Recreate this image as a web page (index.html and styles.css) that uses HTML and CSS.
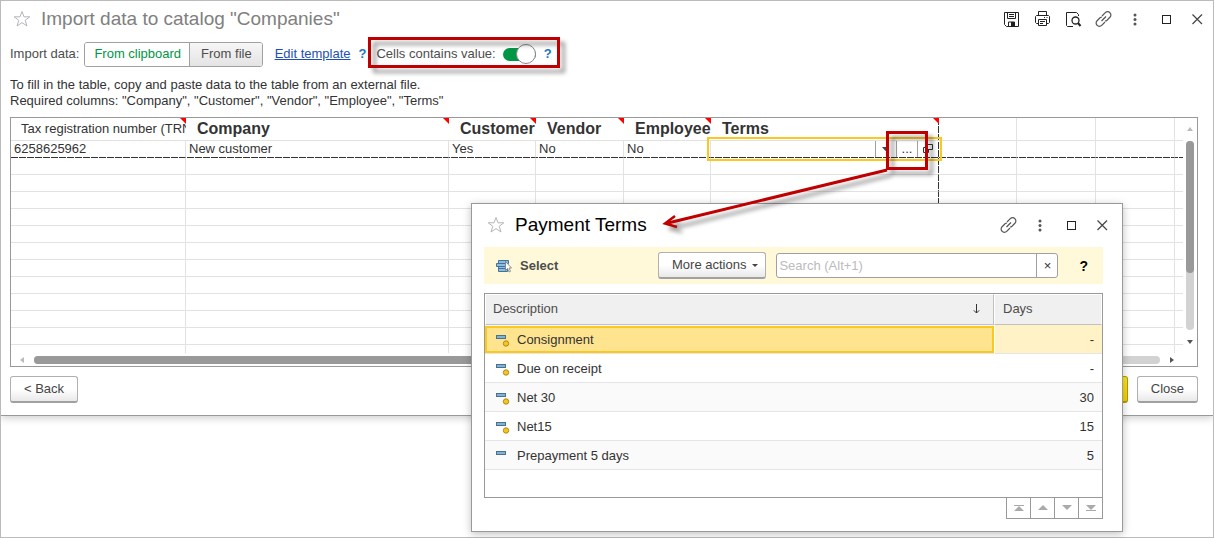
FILE: index.html
```html
<!DOCTYPE html>
<html lang="en">
<head>
  <meta charset="UTF-8" />
  <meta name="viewport" content="width=device-width, initial-scale=1.0"/>
  <title>Import data to catalog "Companies"</title>
  <link rel="stylesheet" href="styles.css">
</head>

<body>
  <svg class="sprite" width="0" height="0" aria-hidden="true">
    <symbol id="star" viewBox="0 0 18 18">
      <path d="M9 1.5l2 5.3h5.8l-4.6 3.5 1.8 5.7L9 12.6 4 16l1.8-5.7L1.200 6.800H7z" fill="none" stroke="#b2b6bb"/>
    </symbol>
    <symbol id="link" viewBox="0 0 18 18">
      <g fill="none" stroke="#555" stroke-width="1.200">
        <path d="M7 6l3.300-3.300a3.200 3.200 0 0 1 4.600 0a3.200 3.200 0 0 1 0 4.600L12 10.200a3.200 3.200 0 0 1-2 .8"/>
        <path d="M10 12l-3.300 3.300a3.200 3.200 0 0 1-4.600 0a3.200 3.200 0 0 1 0-4.600L5 7.800a3.200 3.200 0 0 1 2-.8"/>
        <path d="M6.500 11l4.500-4.500"/>
      </g>
    </symbol>
    <symbol id="dots" viewBox="0 0 18 18">
      <g fill="#555"><circle cx="9" cy="5" r="1.500"/><circle cx="9" cy="9.500" r="1.500"/><circle cx="9" cy="14" r="1.500"/></g>
    </symbol>
    <symbol id="square" viewBox="0 0 18 18">
      <rect x="5.500" y="5.500" width="8" height="8" fill="none" stroke="#222"/>
    </symbol>
    <symbol id="cross" viewBox="0 0 18 18">
      <path d="M4.500 4.500l9.500 9.500M14 4.500L4.500 14" stroke="#444" stroke-width="1.200"/>
    </symbol>
    <symbol id="item" viewBox="0 0 14 14">
      <rect x=".5" y="2.500" width="9" height="3" fill="#7fb2d9" stroke="#4a718f"/>
    </symbol>
    <symbol id="item-dot" viewBox="0 0 14 14">
      <rect x=".5" y="2.500" width="9" height="3" fill="#7fb2d9" stroke="#4a718f"/>
      <circle cx="10" cy="10.500" r="2.700" fill="#f3c623" stroke="#b18a12"/>
    </symbol>
  </svg>

  <main class="window">
    <header class="titlebar">
      <button class="star" aria-label="Favorite"><svg width="18" height="18"><use href="#star"/></svg></button>
      <h1>Import data to catalog "Companies"</h1>
      <div class="tools">
        <button aria-label="Save">
          <svg width="18" height="18" viewBox="0 0 18 18" fill="none" stroke="#222">
            <path d="M2.500 2.500h14v14h-12l-2-2z M5.500 2.500v6h8v-6 M7 4.500h5 M7 6.500h5 M6.500 16v-4h6v4"/>
            <path d="M9 12h3.500v4H9z" fill="#222" stroke="none"/>
          </svg>
        </button>
        <button aria-label="Print">
          <svg width="18" height="18" viewBox="0 0 18 18" fill="none" stroke="#222">
            <path d="M5.500 5.500v-4h8v4 M5 13.500H3.500l-1-1v-6l1-1h12l1 1v6l-1 1H14 M5.500 9.500h8v6h-8z M7 11.500h5 M7 13.500h3 M11 7.500h1 M13.500 7.500h1"/>
          </svg>
        </button>
        <button aria-label="Preview">
          <svg width="18" height="18" viewBox="0 0 18 18" fill="none" stroke="#222">
            <path d="M9 16.500H3.500l-1-1v-13h10l2 2V6"/>
            <circle cx="11.500" cy="10.500" r="3.500" stroke-width="1.300"/>
            <path d="M14 13l2.500 3" stroke-width="2"/>
          </svg>
        </button>
        <button aria-label="Copy link"><svg width="18" height="18"><use href="#link"/></svg></button>
        <button aria-label="More"><svg width="18" height="18"><use href="#dots"/></svg></button>
        <button aria-label="Maximize"><svg width="18" height="18"><use href="#square"/></svg></button>
        <button aria-label="Close window"><svg width="18" height="18"><use href="#cross"/></svg></button>
      </div>
    </header>

    <div class="options">
      <span>Import data:</span>
      <div class="segmented">
        <button class="active">From clipboard</button>
        <button>From file</button>
      </div>
      <a class="template" href="#">Edit template</a>
      <a class="help" href="#">?</a>
      <div class="cells-value">
        <label for="cells">Cells contains value:</label>
        <input class="toggle" type="checkbox" id="cells" checked>
        <a class="help" href="#">?</a>
      </div>
    </div>

    <p class="hint">
      To fill in the table, copy and paste data to the table from an external file.<br>
      Required columns: "Company", "Customer", "Vendor", "Employee", "Terms"
    </p>

    <div class="sheet">
      <table class="grid">
        <colgroup>
          <col class="c-tax"><col class="c-company"><col class="c-customer"><col class="c-vendor"><col class="c-employee">
          <col class="c-terms"><col class="c-first"><col class="c-blank"><col class="c-blank"><col>
        </colgroup>
        <thead>
          <tr>
            <th class="note plain">Tax registration number (TRN)</th>
            <th class="note">Company</th>
            <th class="note">Customer</th>
            <th class="note">Vendor</th>
            <th class="note">Employee</th>
            <th class="note">Terms</th>
            <td></td><td></td><td></td><td></td>
          </tr>
        </thead>
        <tbody>
          <tr class="filled">
            <td>6258625962</td>
            <td>New customer</td>
            <td>Yes</td>
            <td>No</td>
            <td>No</td>
            <td class="editing">
              <div class="editor">
                <input type="text" aria-label="Terms">
                <button aria-label="Drop down"><svg width="8" height="4" viewBox="0 0 8 4"><path d="M0 0h7L3.500 4z" fill="#444"/></svg></button>
                <button aria-label="Select">...</button>
                <button aria-label="Open"><svg width="10" height="10" viewBox="0 0 10 10" fill="none" stroke="#333"><path d="M2.500 .5h7v5h-7z M2.500 3.500h-2v5h5v-3"/></svg></button>
              </div>
            </td>
            <td></td><td></td><td></td><td></td>
          </tr>
          <tr><td></td><td></td><td></td><td></td><td></td><td></td><td></td><td></td><td></td><td></td></tr>
          <tr><td></td><td></td><td></td><td></td><td></td><td></td><td></td><td></td><td></td><td></td></tr>
          <tr><td></td><td></td><td></td><td></td><td></td><td></td><td></td><td></td><td></td><td></td></tr>
          <tr><td></td><td></td><td></td><td></td><td></td><td></td><td></td><td></td><td></td><td></td></tr>
          <tr><td></td><td></td><td></td><td></td><td></td><td></td><td></td><td></td><td></td><td></td></tr>
          <tr><td></td><td></td><td></td><td></td><td></td><td></td><td></td><td></td><td></td><td></td></tr>
          <tr><td></td><td></td><td></td><td></td><td></td><td></td><td></td><td></td><td></td><td></td></tr>
          <tr><td></td><td></td><td></td><td></td><td></td><td></td><td></td><td></td><td></td><td></td></tr>
          <tr><td></td><td></td><td></td><td></td><td></td><td></td><td></td><td></td><td></td><td></td></tr>
          <tr><td></td><td></td><td></td><td></td><td></td><td></td><td></td><td></td><td></td><td></td></tr>
          <tr><td></td><td></td><td></td><td></td><td></td><td></td><td></td><td></td><td></td><td></td></tr>
          <tr class="cut"><td></td><td></td><td></td><td></td><td></td><td></td><td></td><td></td><td></td><td></td></tr>
        </tbody>
      </table>
      <div class="scroll-y">
        <svg width="6" height="4" viewBox="0 0 6 4"><path d="M0 4h6L3 0z" fill="#bbb"/></svg>
        <div class="track"><div class="thumb"></div></div>
        <svg width="6" height="4" viewBox="0 0 6 4"><path d="M0 0h6L3 4z" fill="#555"/></svg>
      </div>
      <div class="scroll-x">
        <svg width="4" height="6" viewBox="0 0 4 6"><path d="M4 0v6L0 3z" fill="#bbb"/></svg>
        <div class="track"><div class="thumb"></div></div>
        <svg width="4" height="6" viewBox="0 0 4 6"><path d="M0 0v6l4-3z" fill="#555"/></svg>
      </div>
    </div>

    <footer class="footer">
      <button class="btn">&lt; Back</button>
      <button class="btn next" aria-label="Next"></button>
      <button class="btn">Close</button>
    </footer>
  </main>

  <section class="dialog">
    <header class="titlebar">
      <button class="star" aria-label="Favorite"><svg width="18" height="18"><use href="#star"/></svg></button>
      <h2>Payment Terms</h2>
      <div class="tools">
        <button aria-label="Copy link"><svg width="18" height="18"><use href="#link"/></svg></button>
        <button aria-label="More"><svg width="18" height="18"><use href="#dots"/></svg></button>
        <button aria-label="Maximize"><svg width="18" height="18"><use href="#square"/></svg></button>
        <button aria-label="Close dialog"><svg width="18" height="18"><use href="#cross"/></svg></button>
      </div>
    </header>

    <div class="commands">
      <button class="select">
        <svg width="16" height="16" viewBox="0 0 16 16">
          <g fill="#8dbce0" stroke="#42739b">
            <path d="M2.500 2.500h10v3h-10z M.5 5.500h10v3H.5z M2.500 8.500h9v2h-9z M2.500 10.500h9v3h-9z"/>
          </g>
          <path d="M9.500 3.500v9l2-2 1.500 3.500 1.500-.7-1.500-3.300h2.500z" fill="#fff" stroke="#777" stroke-width=".8"/>
        </svg>
        Select
      </button>
      <button class="btn more">More actions <svg width="6" height="3" viewBox="0 0 6 3"><path d="M0 0h6L3 3z" fill="#444"/></svg></button>
      <div class="search">
        <input type="text" placeholder="Search (Alt+1)" aria-label="Search">
        <button aria-label="Clear">×</button>
      </div>
      <button class="ask">?</button>
    </div>

    <div class="list">
      <table>
        <colgroup><col><col class="c-days"></colgroup>
        <thead>
          <tr>
            <th>
              <div class="sorted">Description
                <svg width="7" height="10" viewBox="0 0 7 10"><path d="M3.500 0v9M.8 6.300l2.700 2.700 2.700-2.700" fill="none" stroke="#333"/></svg>
              </div>
            </th>
            <th>Days</th>
          </tr>
        </thead>
        <tbody>
          <tr class="current">
            <td><div class="name"><svg width="14" height="14"><use href="#item-dot"/></svg>Consignment</div></td>
            <td>-</td>
          </tr>
          <tr>
            <td><div class="name"><svg width="14" height="14"><use href="#item-dot"/></svg>Due on receipt</div></td>
            <td>-</td>
          </tr>
          <tr>
            <td><div class="name"><svg width="14" height="14"><use href="#item-dot"/></svg>Net 30</div></td>
            <td>30</td>
          </tr>
          <tr>
            <td><div class="name"><svg width="14" height="14"><use href="#item-dot"/></svg>Net15</div></td>
            <td>15</td>
          </tr>
          <tr>
            <td><div class="name"><svg width="14" height="14"><use href="#item"/></svg>Prepayment 5 days</div></td>
            <td>5</td>
          </tr>
        </tbody>
      </table>
    </div>

    <div class="pager">
      <button aria-label="First"><svg width="10" height="6" viewBox="0 0 10 6"><path d="M0 0h10v1H0z M5 1l5 5H0z" fill="#aaa"/></svg></button>
      <button aria-label="Previous"><svg width="10" height="6" viewBox="0 0 10 6"><path d="M5 0l5 5H0z" fill="#aaa"/></svg></button>
      <button aria-label="Next"><svg width="10" height="6" viewBox="0 0 10 6"><path d="M0 0h10L5 5z" fill="#aaa"/></svg></button>
      <button aria-label="Last"><svg width="10" height="6" viewBox="0 0 10 6"><path d="M0 0h10L5 5z M0 5h10v1H0z" fill="#aaa"/></svg></button>
    </div>
  </section>

  <!-- marks the select button and points to the dialog -->
  <svg class="pointer" width="290" height="120" viewBox="0 0 290 120" fill="none" stroke="#c00000" stroke-width="3" aria-hidden="true">
    <rect x="227.500" y="7.500" width="39" height="36"/>
    <path d="M227 45L8 98"/>
    <path d="M15 91L5 98.500L17 102" stroke-width="2.500"/>
  </svg>
</body>
</html>
```

FILE: styles.css
```css
* {
  box-sizing: border-box;
}
body {
  margin: 0;
  min-height: 100vh;
  border: 1px solid #bbb;
  background-color: #fff;
  color: #333;
  font-family: "Liberation Sans", Arial, sans-serif;
  font-size: 13px;
  line-height: 16px;
}
button, input {
  font: inherit;
  color: inherit;
  outline: none;
}
button {
  padding: 0;
  border: none;
  background: none;
}
svg {
  flex: none;
}
.sprite {
  position: absolute;
}

/* main window */
.window {
  border-bottom: 1px solid #999;
  box-shadow: 0 2px 8px rgba(0, 0, 0, 0.2);
}
.titlebar {
  display: flex;
  align-items: center;
  height: 36px;
  padding: 0 1px 0 12px;
}
.star {
  display: flex;
  margin-right: 10px;
}
h1, h2 {
  margin: 0;
  font-size: 19px;
  font-weight: normal;
  line-height: 24px;
  color: #808080;
}
h2 {
  color: #000;
}
.tools {
  display: flex;
  margin-left: auto;
}
.tools button {
  display: flex;
  justify-content: center;
  width: 31px;
}
.options {
  display: flex;
  align-items: center;
  height: 34px;
  padding-left: 9px;
  color: #4d4d4d;
}
.segmented {
  display: flex;
  height: 25px;
  margin: 0 12px 0 5px;
  border: 1px solid #a0a0a0;
  border-radius: 3px;
}
.segmented button {
  padding: 0 10px 0 11px;
  border-radius: 0 2px 2px 0;
  background: linear-gradient(#f6f6f6, #e4e4e4);
}
.segmented .active {
  padding: 0 8px 0 9px;
  border-right: 1px solid #a0a0a0;
  border-radius: 2px 0 0 2px;
  background: #fff;
  color: #009646;
}
.template {
  color: #1d50b5;
}
.help {
  margin-left: 8px;
  color: #1a78c2;
  text-decoration: none;
  font-weight: bold;
}
.cells-value {
  position: relative;
  display: flex;
  align-items: center;
  margin-left: 10px;
}
.cells-value::after {
  content: "";
  position: absolute;
  inset: -9px -8px -6px;
  border: 3px solid #c00000;
  filter: drop-shadow(5px 5px 2px rgba(0, 0, 0, 0.4));
  pointer-events: none;
}
.toggle {
  appearance: none;
  display: flex;
  justify-content: flex-end;
  align-items: center;
  width: 33px;
  height: 13px;
  margin: 0 0 0 7px;
  border-radius: 7px;
  background: #009646;
}
.toggle::before {
  content: "";
  flex: none;
  width: 18px;
  height: 18px;
  border: 1px solid #888;
  border-radius: 50%;
  background: #fff;
}
.hint {
  margin: 6px 9px 8px;
}

/* spreadsheet */
.sheet {
  display: grid;
  grid-template-columns: 1fr 14px;
  margin: 0 15px 0 9px;
  border: 1px solid #999;
}
table {
  width: 100%;
  table-layout: fixed;
  border-collapse: separate;
  border-spacing: 0;
}
.c-tax { width: 175px; }
.c-company { width: 263px; }
.c-customer, .c-employee { width: 87px; }
.c-vendor { width: 88px; }
.c-terms {
  width: 228px;
  background: repeating-linear-gradient(#333 0 7px, #fff 7px 8px) right / 1px 100% no-repeat;
}
.c-first { width: 78px; }
.c-blank { width: 79px; }
.grid th {
  height: 23px;
  padding: 0 0 0 11px;
  border-bottom: 1px solid #e2e2e2;
  font-size: 16px;
  line-height: 22px;
  text-align: left;
  white-space: nowrap;
  overflow: hidden;
}
.grid .plain {
  padding-left: 10px;
  font-size: 13px;
  font-weight: normal;
}
.note {
  position: relative;
}
.note::after {
  content: "";
  position: absolute;
  top: 0;
  right: 0;
  border-top: 6px solid #f00;
  border-left: 6px solid transparent;
}
.grid td {
  height: 17px;
  padding: 0 0 0 3px;
  border-right: 1px solid #e2e2e2;
  border-bottom: 1px solid #e2e2e2;
}
.grid td:last-child {
  border-right: none;
}
.grid tbody td:nth-child(6) {
  border-right-color: transparent;
}
.grid .filled {
  background: repeating-linear-gradient(to right, #333 0 7px, #fff 7px 8px) bottom / 100% 1px no-repeat;
}
.grid .filled td {
  border-bottom-color: transparent;
}
.grid .cut td {
  height: 8px;
  border-bottom: none;
}
.editing {
  position: relative;
}
.editor {
  position: absolute;
  inset: -4px;
  display: flex;
  padding: 2px 2px 2px 0;
  border: 2px solid #fac81e;
}
.editor input {
  flex: 1;
  min-width: 0;
  padding: 0 4px;
  border: none;
  background: none;
}
.editor button {
  display: flex;
  align-items: center;
  justify-content: center;
  width: 21px;
  border-left: 1px solid #a0a0a0;
}
.scroll-y, .scroll-x {
  display: flex;
  align-items: center;
}
.scroll-y {
  flex-direction: column;
  gap: 10px;
  padding: 9px 0;
}
.scroll-x {
  gap: 10px;
  height: 13px;
  padding: 0 9px;
}
.track {
  flex: 1;
  border-radius: 4px;
  background: #d2d2d2;
}
.thumb {
  border-radius: 4px;
  background: #999;
}
.scroll-y .track { width: 8px; }
.scroll-y .thumb { height: 70%; }
.scroll-x .track, .scroll-x .thumb { height: 8px; }
.scroll-x .thumb { width: 80%; }

.btn {
  height: 27px;
  padding: 0 13px;
  border: 1px solid #b0b0b0;
  border-bottom: 2px solid #a0a0a0;
  border-radius: 3px;
  background: linear-gradient(#fff 50%, #e9e9e9);
  color: #444;
}
.footer {
  display: flex;
  gap: 9px;
  padding: 9px 15px 12px 9px;
}
.next {
  width: 80px;
  margin-left: auto;
  border-color: #b39b00;
  background: linear-gradient(#ffe61e, #f0d200);
}

/* payment terms dialog */
.dialog {
  position: absolute;
  left: 471px;
  top: 203px;
  width: 652px;
  padding: 0 19px 12px 12px;
  border: 1px solid #999;
  background: #fff;
  box-shadow: 0 2px 8px rgba(0, 0, 0, 0.25);
}
.dialog .titlebar {
  height: 41px;
  margin: 0 -15px 2px 0;
  padding-left: 3px;
}
.commands {
  display: flex;
  align-items: center;
  height: 37px;
  padding: 0 15px 0 12px;
  background: #fff9d9;
}
.select {
  display: flex;
  align-items: center;
  gap: 8px;
  margin-right: auto;
  font-weight: bold;
  color: #4d4d4d;
}
.more {
  display: flex;
  align-items: center;
  gap: 6px;
  padding: 0 7px 0 13px;
}
.search {
  display: flex;
  width: 282px;
  height: 25px;
  margin: 0 21px 0 10px;
  border: 1px solid #a0a0a0;
  border-radius: 3px;
  background: #fff;
}
.search input {
  flex: 1;
  min-width: 0;
  padding: 0 2px;
  border: none;
  background: none;
}
.search input::placeholder {
  color: #bbb;
}
.search button {
  width: 21px;
  border-left: 1px solid #a0a0a0;
}
.ask {
  font-size: 14px;
  font-weight: bold;
  color: #000;
}
.list {
  min-height: 205px;
  margin-top: 9px;
  border: 1px solid #999;
}
.c-days { width: 108px; }
.list th {
  height: 31px;
  padding: 0 8px 2px;
  border: 1px solid #fff;
  border-bottom: 1px solid #c0c0c0;
  background: #f0f0f0;
  color: #4d4d4d;
  font-weight: normal;
  text-align: left;
}
.list th:first-child {
  padding-left: 7px;
  border-right: 1px solid #c0c0c0;
}
.sorted {
  display: flex;
  align-items: center;
  justify-content: space-between;
  padding-right: 5px;
}
.list td {
  height: 29px;
  padding: 2px 8px 0;
  border-bottom: 1px solid #e5e5e5;
  text-align: right;
}
.list td:first-child {
  padding: 0;
}
.list tbody tr:nth-child(odd) {
  background: #fafafa;
}
.name {
  display: flex;
  align-items: center;
  gap: 7px;
  height: 28px;
  padding: 2px 0 0 11px;
}
.current .name {
  height: 27px;
  margin-top: 1px;
  padding: 0 0 0 9px;
  border: 2px solid #fac81e;
  background: #ffe48f;
}
.list .current td:last-child {
  border-left: 1px solid #fff;
  background: #fff2c6;
}
.pager {
  display: flex;
  justify-content: flex-end;
}
.pager button {
  display: flex;
  align-items: center;
  justify-content: center;
  width: 25px;
  height: 22px;
  margin: -1px 0 0 -1px;
  border: 1px solid #999;
}

.pointer {
  position: absolute;
  left: 660px;
  top: 125px;
  filter: drop-shadow(5px 5px 2px rgba(0, 0, 0, 0.4));
  pointer-events: none;
}
```
